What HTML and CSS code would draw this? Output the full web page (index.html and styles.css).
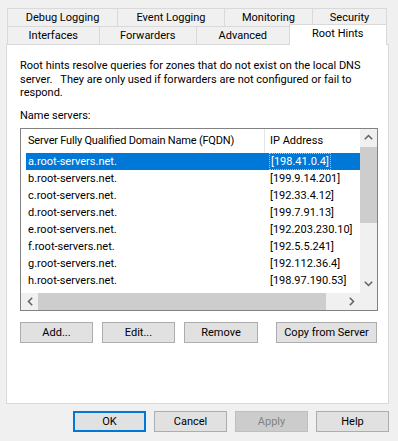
FILE: index.html
```html
<!DOCTYPE html>
<html lang="en">
<head>
  <meta charset="UTF-8" />
  <title>DNS Server Properties - Root Hints</title>
  <link rel="stylesheet" href="styles.css">
</head>
<body>
  <div class="dialog">
    <div class="tabs">
      <div class="tab-row">
        <div class="tab w-debug">Debug Logging</div>
        <div class="tab w-event">Event Logging</div>
        <div class="tab w-monitor">Monitoring</div>
        <div class="tab w-security">Security</div>
      </div>
      <div class="tab-row">
        <div class="tab w-interfaces">Interfaces</div>
        <div class="tab w-forwarders">Forwarders</div>
        <div class="tab w-advanced">Advanced</div>
        <div class="tab selected w-roothints">Root Hints</div>
      </div>
    </div>

    <div class="panel">
      <p class="intro">Root hints resolve queries for zones that do not exist on the local DNS<br>server.&nbsp;&nbsp; They are only used if forwarders are not configured or fail to<br>respond.</p>

      <div class="list-label">Name servers:</div>

      <div class="listview">
        <div class="list-main">
          <div class="list-head">
            <div class="col-name">Server Fully Qualified Domain Name (FQDN)</div>
            <div class="col-ip">IP Address</div>
          </div>
          <div class="list-rows">
            <div class="row selected"><span class="cell-name">a.root-servers.net.</span><span class="cell-ip"><span class="focus">[198.41.0.4]</span></span></div>
            <div class="row"><span class="cell-name">b.root-servers.net.</span><span class="cell-ip">[199.9.14.201]</span></div>
            <div class="row"><span class="cell-name">c.root-servers.net.</span><span class="cell-ip">[192.33.4.12]</span></div>
            <div class="row"><span class="cell-name">d.root-servers.net.</span><span class="cell-ip">[199.7.91.13]</span></div>
            <div class="row"><span class="cell-name">e.root-servers.net.</span><span class="cell-ip">[192.203.230.10]</span></div>
            <div class="row"><span class="cell-name">f.root-servers.net.</span><span class="cell-ip">[192.5.5.241]</span></div>
            <div class="row"><span class="cell-name">g.root-servers.net.</span><span class="cell-ip">[192.112.36.4]</span></div>
            <div class="row"><span class="cell-name">h.root-servers.net.</span><span class="cell-ip">[198.97.190.53]</span></div>
          </div>
        </div>

        <div class="vscroll">
          <div class="sb-btn">
            <svg width="9" height="6" viewBox="0 0 9 6"><path d="M0.8 5.2 L4.5 1.5 L8.2 5.2" fill="none" stroke="#606060" stroke-width="1.5"/></svg>
          </div>
          <div class="v-track"><div class="v-thumb"></div></div>
          <div class="sb-btn">
            <svg width="9" height="6" viewBox="0 0 9 6"><path d="M0.8 0.8 L4.5 4.5 L8.2 0.8" fill="none" stroke="#606060" stroke-width="1.5"/></svg>
          </div>
        </div>

        <div class="hscroll">
          <div class="sb-btn">
            <svg width="6" height="9" viewBox="0 0 6 9"><path d="M5.2 0.8 L1.5 4.5 L5.2 8.2" fill="none" stroke="#606060" stroke-width="1.5"/></svg>
          </div>
          <div class="h-track"><div class="h-thumb"></div></div>
          <div class="sb-btn">
            <svg width="6" height="9" viewBox="0 0 6 9"><path d="M0.8 0.8 L4.5 4.5 L0.8 8.2" fill="none" stroke="#606060" stroke-width="1.5"/></svg>
          </div>
        </div>
        <div class="sb-corner"></div>
      </div>

      <div class="list-buttons">
        <button class="btn w-add">Add...</button>
        <button class="btn w-edit">Edit...</button>
        <button class="btn w-remove">Remove</button>
        <button class="btn w-copy">Copy from Server</button>
      </div>
    </div>

    <div class="dialog-buttons">
      <button class="btn default">OK</button>
      <button class="btn">Cancel</button>
      <button class="btn" disabled>Apply</button>
      <button class="btn">Help</button>
    </div>
  </div>
</body>
</html>
```

FILE: styles.css
```css
/* window background & text */
html, body {
  margin: 0;
  padding: 0;
  background: #f0f0f0;
  font-family: Roboto, "Liberation Sans", sans-serif;
  font-size: 11px;
  color: #000;
}

.dialog {
  width: 398px;
  height: 441px;
  padding-top: 8px;
  box-sizing: border-box;
}

/* two rows of tabs */
.tabs {
  margin-left: 7px;
  width: 380px;
}
.tab-row {
  display: flex;
  height: 18px;
}
.tab {
  box-sizing: border-box;
  height: 18px;
  line-height: 17px;
  text-align: center;
  background: #f0f0f0;
  border-top: 1px solid #d9d9d9;
  border-right: 1px solid #d9d9d9;
  white-space: nowrap;
}
.tab:first-child {
  border-left: 1px solid #d9d9d9;
}
.tab.selected {
  position: relative;
  z-index: 1;
  height: 21px;
  margin-top: -2px;
  margin-left: -1px;
  background: #fff;
  border-left: 1px solid #d9d9d9;
  line-height: 18px;
}

.w-debug { width: 111px; }
.w-event { width: 107px; }
.w-monitor { width: 88px; }
.w-security { width: 74px; }
.w-interfaces { width: 93px; }
.w-forwarders { width: 98px; }
.w-advanced { width: 93px; }
.w-roothints { width: 99px; }

/* white page under the tabs */
.panel {
  box-sizing: border-box;
  margin-left: 6px;
  width: 383px;
  height: 360px;
  background: #fff;
  border: 1px solid #d9d9d9;
  padding: 0 10px 0 13px;
}
.intro {
  margin: 14px 0 0;
  line-height: 13.5px;
  white-space: nowrap;
}
.list-label {
  margin-top: 9px;
  line-height: 14px;
}

/* list view */
.listview {
  margin-top: 5px;
  width: 358px;
  height: 183px;
  box-sizing: border-box;
  border: 1px solid #828282;
  display: grid;
  grid-template-columns: 339px 17px;
  grid-template-rows: 164px 17px;
}
.list-main {
  overflow: hidden;
}
.list-head {
  display: flex;
  height: 24px;
  line-height: 24px;
}
.col-name {
  width: 244px;
  box-sizing: border-box;
  padding-left: 7px;
  border-right: 1px solid #e5e5e5;
  white-space: nowrap;
  letter-spacing: -0.2px;
}
.col-ip {
  padding-left: 5px;
}
.list-rows {
  padding-left: 5px;
}
.row {
  display: flex;
  height: 17px;
  line-height: 17px;
  white-space: nowrap;
}
.row.selected {
  background: #0078d7;
  color: #fff;
}
.cell-name {
  width: 239px;
  padding-left: 2px;
  box-sizing: border-box;
}
.cell-ip {
  padding-left: 5px;
}
.focus {
  display: inline-block;
  height: 15px;
  line-height: 15px;
  outline: 1px dotted #9cc8ee;
  padding: 0 1px;
}

/* scrollbars */
.sb-btn {
  width: 17px;
  height: 17px;
  display: flex;
  align-items: center;
  justify-content: center;
  background: #f0f0f0;
}
.vscroll {
  display: flex;
  flex-direction: column;
  background: #f0f0f0;
}
.v-track {
  flex: 1;
  padding-top: 1px;
}
.v-thumb {
  width: 17px;
  height: 76px;
  background: #cdcdcd;
}
.hscroll {
  display: flex;
  background: #f0f0f0;
}
.h-track {
  flex: 1;
}
.h-thumb {
  width: 288px;
  height: 17px;
  background: #cdcdcd;
}
.sb-corner {
  background: #f0f0f0;
}

/* push buttons */
.btn {
  box-sizing: border-box;
  height: 21px;
  padding: 0;
  background: #e1e1e1;
  border: 1px solid #adadad;
  font-family: inherit;
  font-size: 11px;
  color: #000;
}
.btn.default {
  border: 2px solid #0078d7;
}
.btn:disabled {
  background: #cccccc;
  border-color: #bfbfbf;
  color: #838383;
}

.list-buttons {
  display: flex;
  gap: 9px;
  margin-top: 11px;
  width: 357px;
}
.w-add { width: 73px; }
.w-edit { width: 73px; }
.w-remove { width: 74px; }
.w-copy { width: 101px; margin-left: auto; }

.dialog-buttons {
  display: flex;
  justify-content: flex-end;
  gap: 8px;
  margin-top: 7px;
  padding-right: 9px;
}
.dialog-buttons .btn {
  width: 73px;
}
```
